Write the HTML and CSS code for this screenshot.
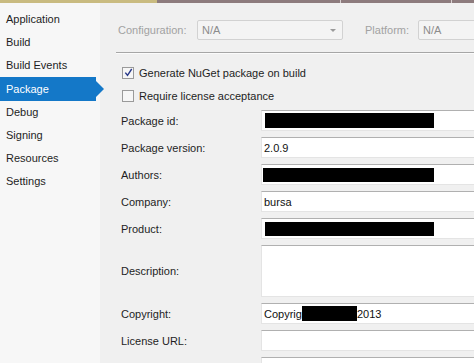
FILE: index.html
```html
<!DOCTYPE html>
<html>
<head>
<meta charset="utf-8">
<link rel="stylesheet" href="styles.css">
</head>
<body>
<div class="topbar">
  <div class="seg seg-active"></div>
  <div class="seg seg-a"></div>
  <div class="seg seg-b"></div>
  <div class="seg seg-c"></div>
</div>
<div class="main">
  <nav class="sidebar">
    <div class="nav-item">Application</div>
    <div class="nav-item">Build</div>
    <div class="nav-item">Build Events</div>
    <div class="nav-item selected">Package</div>
    <div class="nav-item">Debug</div>
    <div class="nav-item">Signing</div>
    <div class="nav-item">Resources</div>
    <div class="nav-item">Settings</div>
  </nav>
  <section class="content">
    <div class="config-row">
      <span class="cfg-label">Configuration:</span>
      <div class="combo combo-config"><span>N/A</span><span class="caret"></span></div>
      <span class="cfg-label plat-label">Platform:</span>
      <div class="combo combo-platform"><span>N/A</span></div>
    </div>
    <div class="separator"></div>
    <label class="check-row first">
      <span class="checkbox checked">
        <svg width="9" height="9" viewBox="0 0 9 9"><path d="M1.3 4.6 L3.5 7.3 L7.7 1" fill="none" stroke="#2a3a8a" stroke-width="1.4"/></svg>
      </span>
      <span>Generate NuGet package on build</span>
    </label>
    <label class="check-row">
      <span class="checkbox"></span>
      <span>Require license acceptance</span>
    </label>
    <div class="form">
      <div class="lbl">Package id:</div>
      <div class="box"><span class="redact r-id"></span></div>
      <div class="lbl">Package version:</div>
      <div class="box">2.0.9</div>
      <div class="lbl">Authors:</div>
      <div class="box"><span class="redact r-auth"></span></div>
      <div class="lbl">Company:</div>
      <div class="box">bursa</div>
      <div class="lbl">Product:</div>
      <div class="box"><span class="redact r-prod"></span></div>
      <div class="lbl">Description:</div>
      <div class="box desc"></div>
      <div class="lbl">Copyright:</div>
      <div class="box">Copyrig<span class="redact r-copy"></span>2013</div>
      <div class="lbl">License URL:</div>
      <div class="box"></div>
      <div class="lbl">Project URL:</div>
      <div class="box"></div>
    </div>
  </section>
</div>
</body>
</html>
```
FILE: styles.css
```css
html, body {
  margin: 0;
  padding: 0;
}
body {
  width: 474px;
  height: 363px;
  overflow: hidden;
  background: #f0f0f0;
  font-family: "Liberation Sans", Arial, sans-serif;
  font-size: 11px;
  color: #1e1e1e;
}
.topbar {
  display: flex;
  height: 3px;
}
.seg { height: 3px; }
.seg-active { width: 157px; background: #c9bb80; }
.seg-a { width: 183px; background: #8d7b7d; border-right: 1px solid #d8d0d0; }
.seg-b { width: 110px; background: #8d7b7d; border-right: 1px solid #d8d0d0; }
.seg-c { flex: 1; background: #8d7b7d; }
.main {
  display: flex;
  height: 360px;
}
.sidebar {
  width: 100px;
  flex: none;
  background: #f7f7f7;
  padding-top: 5px;
  position: relative;
  z-index: 1;
}
.nav-item {
  height: 23px;
  line-height: 23px;
  padding-left: 6px;
  color: #1e1e1e;
  white-space: nowrap;
  position: relative;
}
.nav-item.selected {
  background: #1478c8;
  color: #ffffff;
  width: 90px;
  height: 24px;
  line-height: 24px;
}
.nav-item.selected::after {
  content: "";
  position: absolute;
  right: -8px;
  top: 4px;
  border-left: 8px solid #1478c8;
  border-top: 8px solid transparent;
  border-bottom: 8px solid transparent;
}
.content {
  flex: 1;
  overflow: hidden;
  padding-left: 16px;
  min-width: 0;
}
.config-row {
  display: flex;
  align-items: center;
  margin-top: 16px;
  height: 21px;
  white-space: nowrap;
}
.cfg-label {
  color: #a2a2a2;
  padding-left: 2px;
  width: 79px;
  flex: none;
}
.plat-label { width: 53px; margin-left: 20px; }
.combo {
  border: 1px solid #d2d2d2;
  background: #f4f4f4;
  border-radius: 2px;
  color: #8c8c8c;
  display: flex;
  align-items: center;
  padding-left: 4px;
  box-sizing: border-box;
  flex: none;
  height: 20px;
  position: relative;
}
.combo-config { width: 146px; }
.combo-platform { width: 80px; }
.caret {
  position: absolute;
  right: 6px;
  top: 8px;
  border-top: 3px solid #9a9a9a;
  border-left: 3px solid transparent;
  border-right: 3px solid transparent;
}
.separator {
  margin-top: 12px;
  height: 1px;
  background: #a6a6a6;
  border-bottom: 1px solid #fbfbfb;
}
.check-row {
  display: flex;
  align-items: center;
  height: 23px;
  padding-left: 6px;
  gap: 5px;
  white-space: nowrap;
}
.check-row.first { margin-top: 7px; }
.checkbox {
  width: 10px;
  height: 10px;
  border: 1px solid #9a9a9a;
  background: #f6f6f6;
  display: flex;
  align-items: center;
  justify-content: center;
  flex: none;
}
.form {
  display: grid;
  grid-template-columns: 140px 240px;
  row-gap: 6px;
  margin-top: 3px;
  padding-left: 5px;
}
.lbl {
  display: flex;
  align-items: center;
  white-space: nowrap;
}
.box {
  height: 21px;
  box-sizing: border-box;
  background: #ffffff;
  border: 1px solid #e4e4e4;
  border-top-color: #b0b0b0;
  display: flex;
  align-items: center;
  padding-left: 2px;
  white-space: nowrap;
  color: #111;
}
.redact {
  display: inline-block;
  background: #000;
  height: 15px;
}
.r-id { width: 169px; margin-left: 1px; }
.r-auth { width: 171px; margin-left: -1px; height: 14px; }
.r-prod { width: 169px; margin-left: 1px; height: 14px; }
.r-copy { width: 55px; height: 15px; }
.desc { height: 52px; }
```
